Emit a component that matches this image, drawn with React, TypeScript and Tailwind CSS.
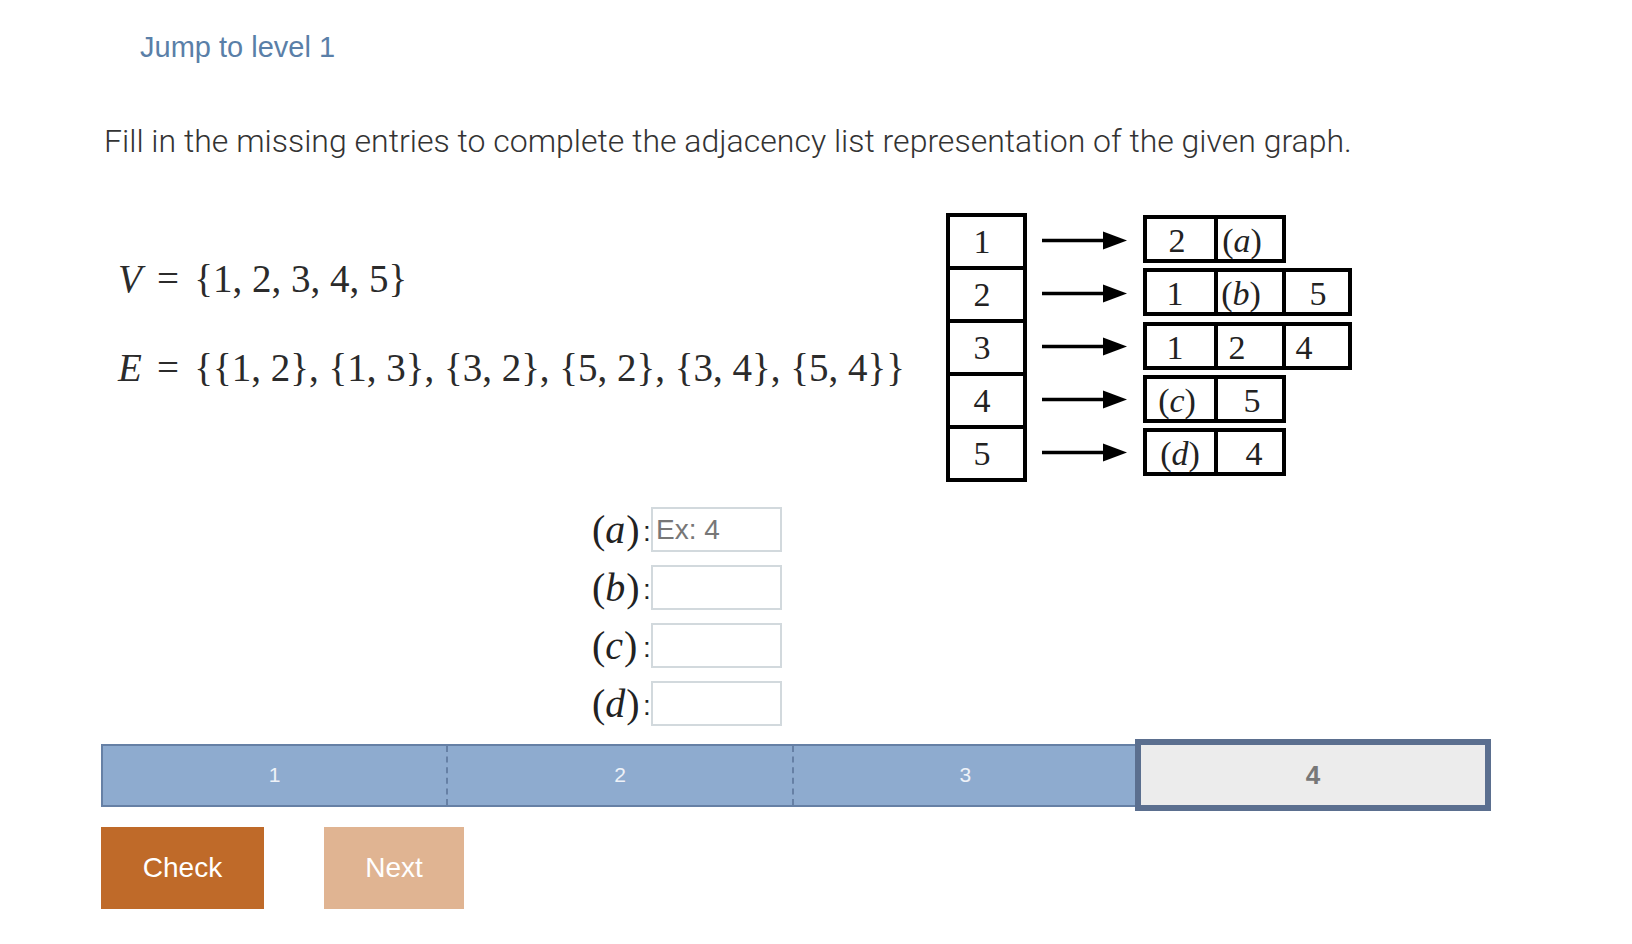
import React from "react";

const sans = "font-['Liberation_Sans',Arial,sans-serif]";
const serif = "font-['Liberation_Serif','Times_New_Roman',serif]";

// thin gap after a comma inside a set
function S() {
  return <span className="inline-block w-[0.25em]" />;
}

function Eq() {
  return <span className="mx-[0.39em]">=</span>;
}

type Cell = { t: string; x: number; v?: boolean };

const rows: { edges: number[]; cells: Cell[] }[] = [
  { edges: [201, 272, 340], cells: [{ t: "2", x: 233 }, { t: "a", x: 298, v: true }] },
  { edges: [201, 272, 340, 406], cells: [{ t: "1", x: 231 }, { t: "b", x: 297, v: true }, { t: "5", x: 374 }] },
  { edges: [201, 272, 340, 406], cells: [{ t: "1", x: 231 }, { t: "2", x: 293 }, { t: "4", x: 360 }] },
  { edges: [201, 272, 340], cells: [{ t: "c", x: 233, v: true }, { t: "5", x: 308 }] },
  { edges: [201, 272, 340], cells: [{ t: "d", x: 236, v: true }, { t: "4", x: 310 }] },
];

const rowTops = [6, 59, 113, 166, 219];

function Diagram() {
  return (
    <svg width="412" height="274" viewBox="0 0 412 274" className="shrink-0">
      <g fill="none" stroke="#000" strokeWidth="4">
        {[0, 1, 2, 3, 4].map((i) => (
          <rect key={i} x="4" y={4 + 53 * i} width="77" height="53" />
        ))}
        {rows.map((r, i) =>
          r.edges.slice(0, -1).map((e, j) => (
            <rect key={`${i}-${j}`} x={e} y={rowTops[i]} width={r.edges[j + 1] - e} height="44" />
          ))
        )}
        {[0, 1, 2, 3, 4].map((i) => (
          <line key={i} x1="98" y1={29.5 + 53 * i} x2="162" y2={29.5 + 53 * i} strokeWidth="3.5" />
        ))}
      </g>
      <g fill="#000">
        {[0, 1, 2, 3, 4].map((i) => (
          <polygon key={i} points={`159,${20.5 + 53 * i} 183,${29.5 + 53 * i} 159,${38.5 + 53 * i}`} />
        ))}
      </g>
      <g fontFamily="'Liberation Serif', serif" fontSize="34" fill="#222" textAnchor="middle">
        {[1, 2, 3, 4, 5].map((n, i) => (
          <text key={n} x="38" y={42 + 53 * i}>
            {n}
          </text>
        ))}
        {rows.map((r, i) =>
          r.cells.map((c, j) => (
            <text key={`${i}-${j}`} x={c.x} y={rowTops[i] + 35}>
              {c.v ? (
                <>
                  (<tspan fontStyle="italic">{c.t}</tspan>)
                </>
              ) : (
                c.t
              )}
            </text>
          ))
        )}
      </g>
    </svg>
  );
}

function Blank({ label, placeholder }: { label: string; placeholder?: string }) {
  return (
    <div className="flex h-[45px] items-center">
      <span className={`${serif} w-[51px] text-[40px] leading-[45px] text-[#222]`}>
        (<i className="pr-[1px]">{label}</i>)
      </span>
      <span className={`${sans} w-[8px] pt-[4px] text-[28px] leading-[45px] text-[#222]`}>:</span>
      <input
        className={`${sans} h-[45px] w-[131px] border-2 border-[#d2d9dd] px-[3px] text-[28px] text-[#333] outline-none placeholder:text-[#777]`}
        placeholder={placeholder}
      />
    </div>
  );
}

export default function App() {
  return (
    <div className="min-h-[944px] w-full bg-white pl-[101px]">
      <div className={`${sans} pl-[39px] pt-[30px] text-[29px] leading-[35px] text-[#5a7fa8]`}>
        Jump to level 1
      </div>

      <p className="mt-[56px] pl-[3px] font-['Roboto',sans-serif] text-[32px] font-light leading-[40px] text-[#333]">
        Fill in the missing entries to complete the adjacency list representation of the given graph.
      </p>

      <div className="mt-[50px] flex items-start">
        <div className={`${serif} w-[843px] pl-[17px] pt-[44px] text-[39px] leading-[48px] text-[#2b2b2b]`}>
          <div>
            <i>V</i>
            <Eq />
            {"{"}1,<S />2,<S />3,<S />4,<S />5{"}"}
          </div>
          <div className="mt-[41px]">
            <i>E</i>
            <Eq />
            {"{{"}1,<S />2{"}"},<S />{"{"}1,<S />3{"}"},<S />{"{"}3,<S />2{"}"},<S />{"{"}5,<S />2{"}"},<S />
            {"{"}3,<S />4{"}"},<S />{"{"}5,<S />4{"}}"}
          </div>
        </div>
        <Diagram />
      </div>

      <div className="ml-[491px] mt-[22px] flex flex-col gap-[13px]">
        <Blank label="a" placeholder="Ex: 4" />
        <Blank label="b" />
        <Blank label="c" />
        <Blank label="d" />
      </div>

      <div className={`${sans} mt-[13px] flex h-[72px] w-[1390px] items-center`}>
        <div className="flex h-[63px] w-[1038px] border-2 border-[#6680a5] bg-[#8eabcf] text-[21px] text-[#eef2f8]">
          <div className="flex flex-1 items-center justify-center">1</div>
          <div className="flex flex-1 items-center justify-center border-l-2 border-dashed border-[#6680a5]">2</div>
          <div className="flex flex-1 items-center justify-center border-l-2 border-dashed border-[#6680a5]">3</div>
        </div>
        <div className="-ml-[4px] flex h-[72px] w-[356px] items-center justify-center border-[6px] border-[#5b6f8f] bg-[#ececec] text-[26px] font-bold text-[#777]">
          4
        </div>
      </div>

      <div className={`${sans} mt-[16px] flex gap-[60px] text-[28px] text-white`}>
        <button className="flex h-[82px] w-[163px] items-center justify-center bg-[#bf6a29]">Check</button>
        <button className="flex h-[82px] w-[140px] items-center justify-center bg-[#e0b492]">Next</button>
      </div>
    </div>
  );
}
